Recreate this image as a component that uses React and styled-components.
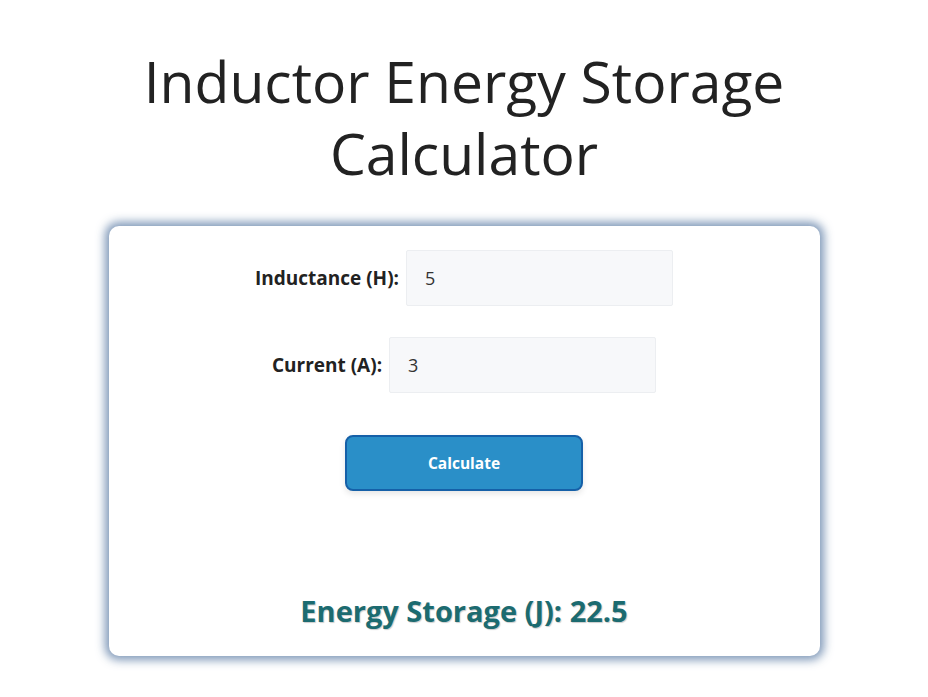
import React, { useState } from "react";
import styled, { createGlobalStyle } from "styled-components";

const GlobalStyle = createGlobalStyle`
  body {
    margin: 0;
    background: #ffffff;
    font-family: "Open Sans", "Noto Sans", sans-serif;
    color: #222222;
  }
`;

const Page = styled.div`
  display: flex;
  flex-direction: column;
  align-items: center;
  padding: 45px 0 40px;
`;

const Title = styled.h1`
  margin: 0 0 37px;
  width: 700px;
  text-align: center;
  font-size: 57px;
  font-weight: 400;
  line-height: 72px;
  color: #222222;
`;

const Card = styled.div`
  width: 711px;
  box-sizing: border-box;
  background: white;
  border-radius: 10px;
  box-shadow: 0 0 10px 4px rgba(104, 134, 172, 0.85);
  padding: 24px 0 26px;
  display: flex;
  flex-direction: column;
  align-items: center;
`;

const Row = styled.div`
  display: flex;
  align-items: center;
  gap: 7px;
  margin-bottom: 31px;
`;

const Label = styled.label`
  font-size: 19px;
  font-weight: 700;
  color: #222;
`;

const Input = styled.input`
  width: 267px;
  height: 56px;
  box-sizing: border-box;
  padding: 0 18px;
  border: 1px solid #eceef1;
  border-radius: 2px;
  background: #f7f8fa;
  font-family: inherit;
  font-size: 18px;
  color: #333;
  outline: none;
`;

const Button = styled.button`
  margin-top: 11px;
  width: 238px;
  height: 56px;
  border: 2px solid #1560a8;
  border-radius: 8px;
  background: #2a8fc8;
  color: white;
  font-family: inherit;
  font-size: 15.5px;
  font-weight: 700;
  box-shadow: 0 3px 6px rgba(0, 0, 0, 0.1);
  cursor: pointer;
`;

const Result = styled.div`
  margin-top: 101px;
  font-size: 29px;
  font-weight: 700;
  line-height: 38px;
  color: #1c6b70;
  text-shadow: 1px 1px 1px rgba(0, 0, 0, 0.2);
`;

const App = () => {
  const [inductance, setInductance] = useState("5");
  const [current, setCurrent] = useState("3");
  const [energy, setEnergy] = useState(22.5);

  const calculate = () => {
    const l = parseFloat(inductance);
    const i = parseFloat(current);
    setEnergy(0.5 * l * i * i);
  };

  return (
    <Page>
      <GlobalStyle />
      <Title>Inductor Energy Storage Calculator</Title>
      <Card>
        <Row>
          <Label>Inductance (H):</Label>
          <Input value={inductance} onChange={(e) => setInductance(e.target.value)} />
        </Row>
        <Row>
          <Label>Current (A):</Label>
          <Input value={current} onChange={(e) => setCurrent(e.target.value)} />
        </Row>
        <Button onClick={calculate}>Calculate</Button>
        <Result>Energy Storage (J): {energy}</Result>
      </Card>
    </Page>
  );
};

export default App;
